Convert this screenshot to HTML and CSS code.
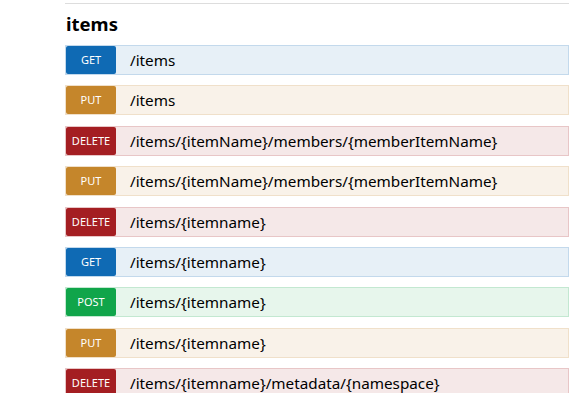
FILE: index.html
```html
<!DOCTYPE html>
<html>
  <head>
    <title>items</title>
    <meta charset="UTF-8" />
    <link rel="stylesheet" href="styles.css">
  </head>
  <body>
    <div class="resource">
      <h2 class="heading">items</h2>
      <ul class="endpoints">
        <li class="op get"><span class="method">GET</span><span class="path">/items</span></li>
        <li class="op put"><span class="method">PUT</span><span class="path">/items</span></li>
        <li class="op delete"><span class="method">DELETE</span><span class="path">/items/{itemName}/members/{memberItemName}</span></li>
        <li class="op put"><span class="method">PUT</span><span class="path">/items/{itemName}/members/{memberItemName}</span></li>
        <li class="op delete"><span class="method">DELETE</span><span class="path">/items/{itemname}</span></li>
        <li class="op get"><span class="method">GET</span><span class="path">/items/{itemname}</span></li>
        <li class="op post"><span class="method">POST</span><span class="path">/items/{itemname}</span></li>
        <li class="op put"><span class="method">PUT</span><span class="path">/items/{itemname}</span></li>
        <li class="op delete"><span class="method">DELETE</span><span class="path">/items/{itemname}/metadata/{namespace}</span></li>
      </ul>
    </div>
  </body>
</html>
```

FILE: styles.css
```css
body {
  margin: 0;
  font-family: "Noto Sans", "Open Sans", sans-serif;
  background: #fff;
  color: #000;
}
.resource {
  margin: 3px 0 0 65px;
  border-top: 1px solid #ddd;
}
.heading {
  margin: 0;
  padding: 9px 0 0 1px;
  height: 32px;
  font-size: 18.5px;
  line-height: 22px;
  font-weight: bold;
}
.endpoints {
  list-style: none;
  margin: 0;
  padding: 0;
}
.op {
  display: flex;
  align-items: center;
  height: 28px;
  margin-bottom: 10.4px;
  border: 1px solid;
}
.method {
  width: 50px;
  height: 28px;
  line-height: 28px;
  border-radius: 2px;
  color: #fff;
  font-size: 11px;
  text-align: center;
  flex-shrink: 0;
}
.path {
  padding-left: 14px;
  font-size: 15.25px;
  white-space: nowrap;
}
.get {
  background: #e7f0f7;
  border-color: #c3d9ec;
}
.get .method {
  background: #0f6ab4;
}
.post {
  background: #e7f6ec;
  border-color: #c3e8d1;
}
.post .method {
  background: #10a54a;
}
.put {
  background: #f9f2e9;
  border-color: #f0e0ca;
}
.put .method {
  background: #c5862b;
}
.delete {
  background: #f5e8e8;
  border-color: #e8c6c7;
}
.delete .method {
  background: #a41e22;
}
```
